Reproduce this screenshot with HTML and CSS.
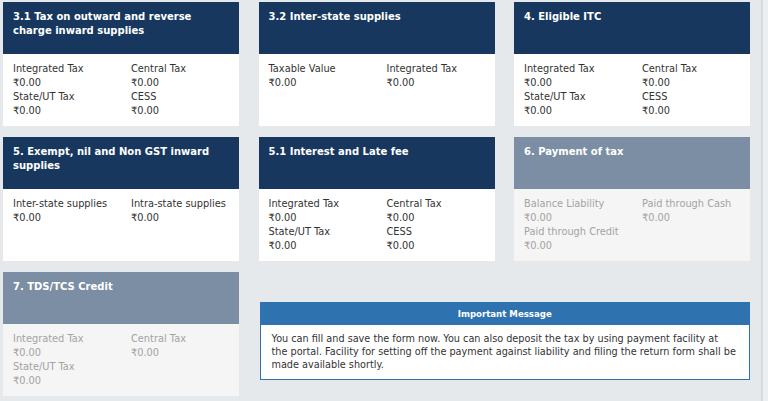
FILE: index.html
```html
<!DOCTYPE html>
<html lang="en">
<head>
<meta charset="utf-8">
<title>GSTR-3B</title>
<link rel="stylesheet" href="styles.css">
</head>
<body>
<div class="page">
  <main class="grid">
    <section class="card">
      <div class="card-head">3.1 Tax on outward and reverse charge inward supplies</div>
      <div class="card-body">
        <div class="cell"><div>Integrated Tax</div><div>₹0.00</div></div>
        <div class="cell"><div>Central Tax</div><div>₹0.00</div></div>
        <div class="cell"><div>State/UT Tax</div><div>₹0.00</div></div>
        <div class="cell"><div>CESS</div><div>₹0.00</div></div>
      </div>
    </section>
    <section class="card">
      <div class="card-head">3.2 Inter-state supplies</div>
      <div class="card-body">
        <div class="cell"><div>Taxable Value</div><div>₹0.00</div></div>
        <div class="cell"><div>Integrated Tax</div><div>₹0.00</div></div>
      </div>
    </section>
    <section class="card">
      <div class="card-head">4. Eligible ITC</div>
      <div class="card-body">
        <div class="cell"><div>Integrated Tax</div><div>₹0.00</div></div>
        <div class="cell"><div>Central Tax</div><div>₹0.00</div></div>
        <div class="cell"><div>State/UT Tax</div><div>₹0.00</div></div>
        <div class="cell"><div>CESS</div><div>₹0.00</div></div>
      </div>
    </section>
    <section class="card">
      <div class="card-head">5. Exempt, nil and Non GST inward supplies</div>
      <div class="card-body">
        <div class="cell"><div>Inter-state supplies</div><div>₹0.00</div></div>
        <div class="cell"><div>Intra-state supplies</div><div>₹0.00</div></div>
      </div>
    </section>
    <section class="card">
      <div class="card-head">5.1 Interest and Late fee</div>
      <div class="card-body">
        <div class="cell"><div>Integrated Tax</div><div>₹0.00</div></div>
        <div class="cell"><div>Central Tax</div><div>₹0.00</div></div>
        <div class="cell"><div>State/UT Tax</div><div>₹0.00</div></div>
        <div class="cell"><div>CESS</div><div>₹0.00</div></div>
      </div>
    </section>
    <section class="card card-disabled">
      <div class="card-head">6. Payment of tax</div>
      <div class="card-body">
        <div class="cell"><div>Balance Liability</div><div>₹0.00</div></div>
        <div class="cell"><div>Paid through Cash</div><div>₹0.00</div></div>
        <div class="cell"><div>Paid through Credit</div><div>₹0.00</div></div>
      </div>
    </section>
    <section class="card card-disabled">
      <div class="card-head">7. TDS/TCS Credit</div>
      <div class="card-body">
        <div class="cell"><div>Integrated Tax</div><div>₹0.00</div></div>
        <div class="cell"><div>Central Tax</div><div>₹0.00</div></div>
        <div class="cell"><div>State/UT Tax</div><div>₹0.00</div></div>
      </div>
    </section>
    <section class="message">
      <div class="message-head">Important Message</div>
      <div class="message-body">You can fill and save the form now. You can also deposit the tax by using payment facility at<br>the portal. Facility for setting off the payment against liability and filing the return form shall be<br>made available shortly.</div>
    </section>
  </main>
  <div class="rail"></div>
</div>
</body>
</html>
```
FILE: styles.css
```css
html, body {
  margin: 0;
  padding: 0;
  background: #e6e9ec;
}
body {
  font-family: "DejaVu Sans", Verdana, sans-serif;
  color: #333;
  width: 768px;
  height: 401px;
  overflow: hidden;
}
.page {
  display: flex;
  height: 401px;
}
.grid {
  flex: 1;
  display: grid;
  grid-template-columns: 236px 236px 236px;
  grid-auto-rows: 124px;
  column-gap: 19.5px;
  row-gap: 11px;
  padding: 2px 0 0 3px;
  align-content: start;
}
.card {
  display: flex;
  flex-direction: column;
  background: #fff;
}
.card-head {
  height: 52px;
  box-sizing: border-box;
  background: #17375e;
  color: #fff;
  font-weight: bold;
  font-size: 10px;
  line-height: 14px;
  padding: 8px 10px 0 10px;
}
.card-body {
  flex: 1;
  display: grid;
  grid-template-columns: 118px 118px;
  align-content: start;
  padding-top: 8px;
  font-size: 9.8px;
  line-height: 14px;
}
.cell {
  padding-left: 10px;
  white-space: nowrap;
}
.card-disabled {
  background: #f5f5f5;
}
.card-disabled .card-head {
  background: #7b8ea3;
}
.card-disabled .card-body {
  color: #a3a3a3;
}
.message {
  grid-column: 2 / 4;
  align-self: start;
  margin-top: 30px;
  margin-left: 1px;
  border: 1px solid #2f72b0;
  background: #fff;
}
.message-head {
  background: #2f72b0;
  color: #fff;
  text-align: center;
  font-size: 8.6px;
  font-weight: bold;
  height: 22px;
  line-height: 22px;
}
.message-body {
  padding: 7px 2px 8px 11px;
  font-size: 9.7px;
  line-height: 13px;
  color: #333;
  white-space: nowrap;
}
.rail {
  width: 6px;
  margin-left: 11px;
  border-left: 2px solid #d6dade;
  background: #eceef0;
}
```
